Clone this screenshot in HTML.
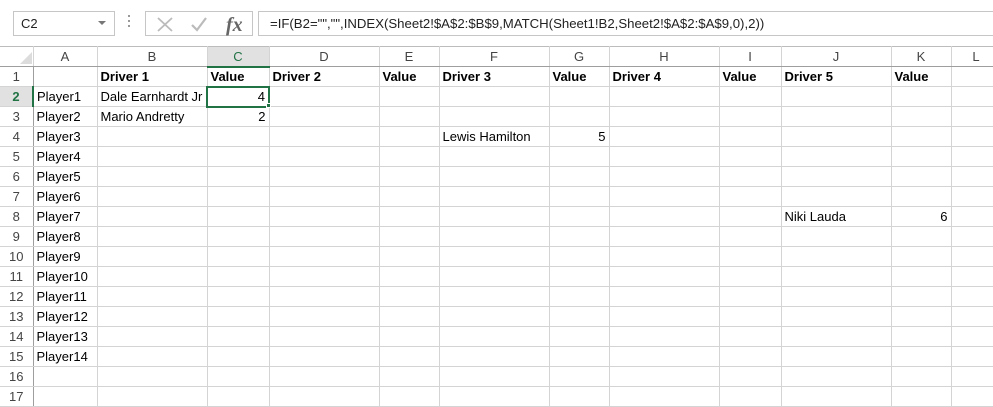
<!DOCTYPE html>
<html><head><meta charset="utf-8"><style>
*{margin:0;padding:0;box-sizing:border-box}
body{width:993px;height:405px;overflow:hidden;background:#fff;font-family:"Liberation Sans",Arial,sans-serif;position:relative}
.nb{position:absolute;left:13px;top:11px;width:102px;height:25px;border:1px solid #c6c6c6;font-size:13px;padding:4px 0 0 7px;color:#222}
.nb .ar{position:absolute;right:8px;top:9px;width:0;height:0;border-left:4px solid transparent;border-right:4px solid transparent;border-top:4px solid #777}
.dots{position:absolute;left:128px;top:15px;width:2px;height:14px;background:repeating-linear-gradient(#999 0 2px,transparent 2px 5px)}
.fx{position:absolute;left:145px;top:11px;width:108px;height:25px;border:1px solid #c6c6c6}
.fb{position:absolute;left:258px;top:11px;width:740px;height:25px;border:1px solid #c6c6c6;font-size:13.2px;padding:4px 0 0 11px;color:#222;white-space:nowrap}
table{position:absolute;left:0;top:46px;width:1001px;border-collapse:collapse;table-layout:fixed;font-size:13px}
td{height:20px;border:1px solid #d4d4d4;padding:0 3px;white-space:nowrap;overflow:hidden;color:#000}
tr.h td{background:#fff;color:#444;text-align:center;border-color:#bcbcbc #d4d4d4 #9e9e9e}
td.r{color:#444;text-align:center;border-right-color:#9e9e9e;font-size:13px;border-left:none}
td.n{text-align:right}
b{font-weight:bold}
</style></head><body>
<div class="nb">C2<span class="ar"></span></div>
<div class="dots"></div>
<div class="fx">
<svg width="108" height="25" style="position:absolute;left:0;top:0">
<path d="M12 6 L26 19 M26 6 L12 19" stroke="#bbb" stroke-width="1.8" fill="none"/>
<path d="M46 13 L51 18 L60 6" stroke="#bbb" stroke-width="2.2" fill="none"/>
<text x="80" y="19" font-family="Liberation Serif,serif" font-style="italic" font-weight="bold" font-size="20" fill="#666">fx</text>
</svg></div>
<div class="fb">=IF(B2="","",INDEX(Sheet2!$A$2:$B$9,MATCH(Sheet1!B2,Sheet2!$A$2:$A$9,0),2))</div>
<table>
<colgroup><col style="width:33px"><col style="width:64px"><col style="width:110px"><col style="width:62px"><col style="width:110px"><col style="width:60px"><col style="width:110px"><col style="width:60px"><col style="width:110px"><col style="width:62px"><col style="width:110px"><col style="width:60px"><col style="width:50px"></colgroup>
<tr class="h"><td style="border-left:none"><svg width="12" height="12" style="position:relative;left:10px;top:3px"><path d="M12 0 L12 12 L0 12Z" fill="#dcdcdc"/></svg></td><td>A</td><td>B</td><td style="background:#e1e1e1;color:#217346;border-bottom:2px solid #217346">C</td><td>D</td><td>E</td><td>F</td><td>G</td><td>H</td><td>I</td><td>J</td><td>K</td><td>L</td></tr>
<tr><td class="r">1</td><td></td><td><b>Driver 1</b></td><td><b>Value</b></td><td><b>Driver 2</b></td><td><b>Value</b></td><td><b>Driver 3</b></td><td><b>Value</b></td><td><b>Driver 4</b></td><td><b>Value</b></td><td><b>Driver 5</b></td><td><b>Value</b></td><td></td></tr>
<tr><td class="r" style="background:#e1e1e1;color:#217346;font-weight:bold;border-right:2px solid #217346">2</td><td>Player1</td><td>Dale Earnhardt Jr</td><td class="n" style="border:2px solid #217346">4</td><td></td><td></td><td></td><td></td><td></td><td></td><td></td><td></td><td></td></tr>
<tr><td class="r">3</td><td>Player2</td><td>Mario Andretty</td><td class="n">2</td><td></td><td></td><td></td><td></td><td></td><td></td><td></td><td></td><td></td></tr>
<tr><td class="r">4</td><td>Player3</td><td></td><td></td><td></td><td></td><td>Lewis Hamilton</td><td class="n">5</td><td></td><td></td><td></td><td></td><td></td></tr>
<tr><td class="r">5</td><td>Player4</td><td></td><td></td><td></td><td></td><td></td><td></td><td></td><td></td><td></td><td></td><td></td></tr>
<tr><td class="r">6</td><td>Player5</td><td></td><td></td><td></td><td></td><td></td><td></td><td></td><td></td><td></td><td></td><td></td></tr>
<tr><td class="r">7</td><td>Player6</td><td></td><td></td><td></td><td></td><td></td><td></td><td></td><td></td><td></td><td></td><td></td></tr>
<tr><td class="r">8</td><td>Player7</td><td></td><td></td><td></td><td></td><td></td><td></td><td></td><td></td><td>Niki Lauda</td><td class="n">6</td><td></td></tr>
<tr><td class="r">9</td><td>Player8</td><td></td><td></td><td></td><td></td><td></td><td></td><td></td><td></td><td></td><td></td><td></td></tr>
<tr><td class="r">10</td><td>Player9</td><td></td><td></td><td></td><td></td><td></td><td></td><td></td><td></td><td></td><td></td><td></td></tr>
<tr><td class="r">11</td><td>Player10</td><td></td><td></td><td></td><td></td><td></td><td></td><td></td><td></td><td></td><td></td><td></td></tr>
<tr><td class="r">12</td><td>Player11</td><td></td><td></td><td></td><td></td><td></td><td></td><td></td><td></td><td></td><td></td><td></td></tr>
<tr><td class="r">13</td><td>Player12</td><td></td><td></td><td></td><td></td><td></td><td></td><td></td><td></td><td></td><td></td><td></td></tr>
<tr><td class="r">14</td><td>Player13</td><td></td><td></td><td></td><td></td><td></td><td></td><td></td><td></td><td></td><td></td><td></td></tr>
<tr><td class="r">15</td><td>Player14</td><td></td><td></td><td></td><td></td><td></td><td></td><td></td><td></td><td></td><td></td><td></td></tr>
<tr><td class="r">16</td><td></td><td></td><td></td><td></td><td></td><td></td><td></td><td></td><td></td><td></td><td></td><td></td></tr>
<tr><td class="r">17</td><td></td><td></td><td></td><td></td><td></td><td></td><td></td><td></td><td></td><td></td><td></td><td></td></tr>
</table>
<div style="position:absolute;left:266px;top:103px;width:5px;height:5px;background:#217346;border:1px solid #fff"></div>
</body></html>
